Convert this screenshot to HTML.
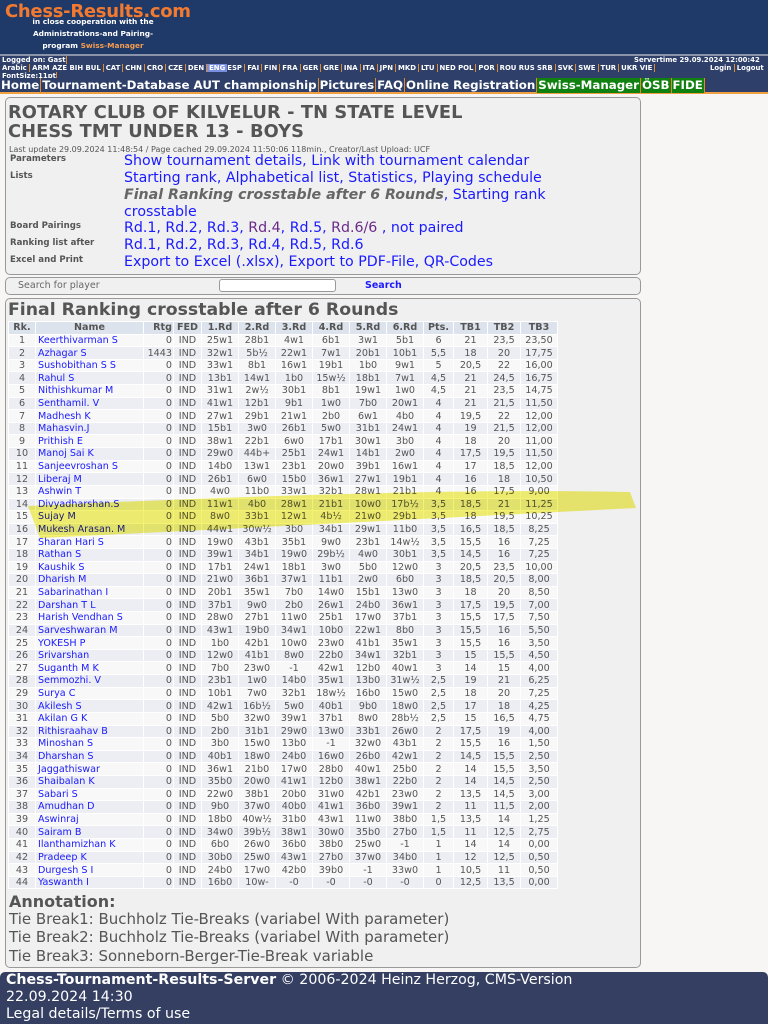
<!DOCTYPE html>
<html><head><meta charset="utf-8">
<style>
*{margin:0;padding:0;box-sizing:border-box}
body{width:768px;height:1024px;overflow:hidden;background:#f8f5f5;font-family:"DejaVu Sans",Verdana,sans-serif;color:#555;position:relative}
#hdr{position:absolute;left:0;top:0;width:768px;height:54px;background:#1f3a68}
#logo{position:absolute;left:5px;top:1px;color:#f27a30;font-weight:bold;font-size:18px;letter-spacing:-0.3px}
#tag{position:absolute;left:8px;top:16px;width:170px;color:#fff;font-size:7.4px;font-weight:bold;text-align:center;line-height:12px;white-space:nowrap}
#tag span{color:#f59b50}
#bar{position:absolute;left:0;top:54px;width:768px;height:40px;background:#2e3f6a;border-top:2px solid #8a93a8;font-size:6.9px;font-weight:bold;color:#fff;line-height:8px}
#bar .r{position:absolute;white-space:nowrap}
#bar i{font-style:normal;border-left:1px solid #e08a30;padding:0 2px}
#nav{position:absolute;left:0;top:78px;height:16px;width:768px;background:#2e3f6a;border-bottom:2px solid #f0a040;font-size:11.8px;font-weight:bold;color:#fff;white-space:nowrap}
#nav span{display:inline-block;height:15px;line-height:15px;padding:0 1px;border-right:1px solid #e08a30}
#nav .g{background:#108010}
.box{position:absolute;left:5px;width:636px;background:#f0f0f0;border:1px solid #999;border-radius:5px}
h1{position:absolute;left:8px;top:103px;font-size:17.8px;line-height:19px;font-weight:bold;color:#555;letter-spacing:0.1px}
.upd{position:absolute;left:9px;top:145px;font-size:8px;color:#555}
.lab{position:absolute;left:10px;font-size:8.6px;font-weight:bold;color:#555}
.lk{position:absolute;left:124px;font-size:14.2px;color:#1a1aff;white-space:nowrap}
.lk em{font-weight:bold;color:#666}
.v{color:#6a2a8a}
table{position:absolute;left:8px;top:321px;border-collapse:collapse;font-size:9.6px;table-layout:fixed}
td,th{height:12.62px;padding:0 1px;border:1px solid #fff;white-space:nowrap;text-align:center;color:#555;font-weight:normal;line-height:11px}
th{background:#dde3ec;font-weight:bold}
tr:nth-child(even) td{background:#f8f8f8}
tr:nth-child(odd) td{background:#eceef3}
td:nth-child(2){text-align:left;color:#1a1aff;padding-left:2px}
td:nth-child(3){text-align:right}
#foot{position:absolute;left:0;top:972px;width:768px;height:52px;background:#343f62;border-radius:5px 5px 0 0;color:#fff;font-size:14.2px;line-height:17px;padding:0 6px}
</style></head><body>
<div id="hdr"><div id="logo">Chess-Results.com</div><div id="tag">in close cooperation with the<br>Administrations-and Pairing-<br>program <span>Swiss-Manager</span></div></div>
<div id="bar">
<div class="r" style="left:2px;top:0px">Logged on: Gast<i></i></div>
<div class="r" style="left:634px;top:0px">Servertime 29.09.2024 12:00:42</div>
<div class="r" style="left:2px;top:8px">Arabic <i>ARM AZE BIH BUL</i><i>CAT</i><i>CHN</i><i>CRO</i><i>CZE</i><i>DEN</i><i style="background:#7b8fe0">ENG</i>ESP <i>FAI</i><i>FIN</i><i>FRA</i><i>GER</i><i>GRE</i><i>INA</i><i>ITA</i><i>JPN</i><i>MKD</i><i>LTU</i><i>NED POL</i><i>POR</i><i>ROU RUS SRB</i><i>SVK</i><i>SWE</i><i>TUR</i><i>UKR VIE</i><i></i></div>
<div class="r" style="left:710px;top:8px">Login <i>Logout</i></div>
<div class="r" style="left:2px;top:16px">FontSize:11pt<i></i></div>
</div>
<div id="nav"><span>Home</span><span>Tournament-Database AUT championship</span><span>Pictures</span><span>FAQ</span><span>Online Registration</span><span class="g">Swiss-Manager</span><span class="g">ÖSB</span><span class="g">FIDE</span></div>

<div class="box" style="top:97px;height:178px"></div>
<h1>ROTARY CLUB OF KILVELUR - TN STATE LEVEL<br>CHESS TMT UNDER 13 - BOYS</h1>
<div class="upd">Last update 29.09.2024 11:48:54 / Page cached 29.09.2024 11:50:06 118min., Creator/Last Upload: UCF</div>
<div class="lab" style="top:154px">Parameters</div>
<div class="lk" style="top:153px">Show tournament details, Link with tournament calendar</div>
<div class="lab" style="top:171px">Lists</div>
<div class="lk" style="top:170px">Starting rank, Alphabetical list, Statistics, Playing schedule</div>
<div class="lk" style="top:187px"><em><i>Final Ranking crosstable after 6 Rounds</i></em>, Starting rank</div>
<div class="lk" style="top:204px">crosstable</div>
<div class="lab" style="top:221px">Board Pairings</div>
<div class="lk" style="top:220px">Rd.1, Rd.2, Rd.3, <span class="v">Rd.4</span>, Rd.5, <span class="v">Rd.6/6</span> , not paired</div>
<div class="lab" style="top:238px">Ranking list after</div>
<div class="lk" style="top:237px">Rd.1, Rd.2, Rd.3, Rd.4, Rd.5, Rd.6</div>
<div class="lab" style="top:255px">Excel and Print</div>
<div class="lk" style="top:254px">Export to Excel (.xlsx), Export to PDF-File, QR-Codes</div>

<div class="box" style="top:277px;height:18px"></div>
<div style="position:absolute;left:18px;top:280px;font-size:9.5px;color:#666">Search for player</div>
<div style="position:absolute;left:219px;top:279px;width:117px;height:13px;background:#fff;border:1px solid #999;border-radius:3px"></div>
<div style="position:absolute;left:365px;top:280px;font-size:9.5px;color:#1a1aff;font-weight:bold">Search</div>

<div class="box" style="top:298px;height:670px"></div>
<div style="position:absolute;left:8px;top:300px;font-size:17.3px;font-weight:bold;color:#555">Final Ranking crosstable after 6 Rounds</div>
<table>
<colgroup><col style="width:27px"><col style="width:108px"><col style="width:30px"><col style="width:28px"><col style="width:37px"><col style="width:37px"><col style="width:37px"><col style="width:37px"><col style="width:37px"><col style="width:37px"><col style="width:30px"><col style="width:34px"><col style="width:33px"><col style="width:37px"></colgroup>
<tr><th>Rk.</th><th>Name</th><th style="text-align:right">Rtg</th><th>FED</th><th>1.Rd</th><th>2.Rd</th><th>3.Rd</th><th>4.Rd</th><th>5.Rd</th><th>6.Rd</th><th>Pts.</th><th>TB1</th><th>TB2</th><th>TB3</th></tr>
<tr><td>1</td><td>Keerthivarman S</td><td>0</td><td>IND</td><td>25w1</td><td>28b1</td><td>4w1</td><td>6b1</td><td>3w1</td><td>5b1</td><td>6</td><td>21</td><td>23,5</td><td>23,50</td></tr>
<tr><td>2</td><td>Azhagar S</td><td>1443</td><td>IND</td><td>32w1</td><td>5b½</td><td>22w1</td><td>7w1</td><td>20b1</td><td>10b1</td><td>5,5</td><td>18</td><td>20</td><td>17,75</td></tr>
<tr><td>3</td><td>Sushobithan S S</td><td>0</td><td>IND</td><td>33w1</td><td>8b1</td><td>16w1</td><td>19b1</td><td>1b0</td><td>9w1</td><td>5</td><td>20,5</td><td>22</td><td>16,00</td></tr>
<tr><td>4</td><td>Rahul S</td><td>0</td><td>IND</td><td>13b1</td><td>14w1</td><td>1b0</td><td>15w½</td><td>18b1</td><td>7w1</td><td>4,5</td><td>21</td><td>24,5</td><td>16,75</td></tr>
<tr><td>5</td><td>Nithishkumar M</td><td>0</td><td>IND</td><td>31w1</td><td>2w½</td><td>30b1</td><td>8b1</td><td>19w1</td><td>1w0</td><td>4,5</td><td>21</td><td>23,5</td><td>14,75</td></tr>
<tr><td>6</td><td>Senthamil. V</td><td>0</td><td>IND</td><td>41w1</td><td>12b1</td><td>9b1</td><td>1w0</td><td>7b0</td><td>20w1</td><td>4</td><td>21</td><td>21,5</td><td>11,50</td></tr>
<tr><td>7</td><td>Madhesh K</td><td>0</td><td>IND</td><td>27w1</td><td>29b1</td><td>21w1</td><td>2b0</td><td>6w1</td><td>4b0</td><td>4</td><td>19,5</td><td>22</td><td>12,00</td></tr>
<tr><td>8</td><td>Mahasvin.J</td><td>0</td><td>IND</td><td>15b1</td><td>3w0</td><td>26b1</td><td>5w0</td><td>31b1</td><td>24w1</td><td>4</td><td>19</td><td>21,5</td><td>12,00</td></tr>
<tr><td>9</td><td>Prithish E</td><td>0</td><td>IND</td><td>38w1</td><td>22b1</td><td>6w0</td><td>17b1</td><td>30w1</td><td>3b0</td><td>4</td><td>18</td><td>20</td><td>11,00</td></tr>
<tr><td>10</td><td>Manoj Sai K</td><td>0</td><td>IND</td><td>29w0</td><td>44b+</td><td>25b1</td><td>24w1</td><td>14b1</td><td>2w0</td><td>4</td><td>17,5</td><td>19,5</td><td>11,50</td></tr>
<tr><td>11</td><td>Sanjeevroshan S</td><td>0</td><td>IND</td><td>14b0</td><td>13w1</td><td>23b1</td><td>20w0</td><td>39b1</td><td>16w1</td><td>4</td><td>17</td><td>18,5</td><td>12,00</td></tr>
<tr><td>12</td><td>Liberaj M</td><td>0</td><td>IND</td><td>26b1</td><td>6w0</td><td>15b0</td><td>36w1</td><td>27w1</td><td>19b1</td><td>4</td><td>16</td><td>18</td><td>10,50</td></tr>
<tr><td>13</td><td>Ashwin T</td><td>0</td><td>IND</td><td>4w0</td><td>11b0</td><td>33w1</td><td>32b1</td><td>28w1</td><td>21b1</td><td>4</td><td>16</td><td>17,5</td><td>9,00</td></tr>
<tr><td>14</td><td>Divyadharshan.S</td><td>0</td><td>IND</td><td>11w1</td><td>4b0</td><td>28w1</td><td>21b1</td><td>10w0</td><td>17b½</td><td>3,5</td><td>18,5</td><td>21</td><td>11,25</td></tr>
<tr><td>15</td><td>Sujay M</td><td>0</td><td>IND</td><td>8w0</td><td>33b1</td><td>12w1</td><td>4b½</td><td>21w0</td><td>29b1</td><td>3,5</td><td>18</td><td>19,5</td><td>10,25</td></tr>
<tr><td>16</td><td>Mukesh Arasan. M</td><td>0</td><td>IND</td><td>44w1</td><td>30w½</td><td>3b0</td><td>34b1</td><td>29w1</td><td>11b0</td><td>3,5</td><td>16,5</td><td>18,5</td><td>8,25</td></tr>
<tr><td>17</td><td>Sharan Hari S</td><td>0</td><td>IND</td><td>19w0</td><td>43b1</td><td>35b1</td><td>9w0</td><td>23b1</td><td>14w½</td><td>3,5</td><td>15,5</td><td>16</td><td>7,25</td></tr>
<tr><td>18</td><td>Rathan S</td><td>0</td><td>IND</td><td>39w1</td><td>34b1</td><td>19w0</td><td>29b½</td><td>4w0</td><td>30b1</td><td>3,5</td><td>14,5</td><td>16</td><td>7,25</td></tr>
<tr><td>19</td><td>Kaushik S</td><td>0</td><td>IND</td><td>17b1</td><td>24w1</td><td>18b1</td><td>3w0</td><td>5b0</td><td>12w0</td><td>3</td><td>20,5</td><td>23,5</td><td>10,00</td></tr>
<tr><td>20</td><td>Dharish M</td><td>0</td><td>IND</td><td>21w0</td><td>36b1</td><td>37w1</td><td>11b1</td><td>2w0</td><td>6b0</td><td>3</td><td>18,5</td><td>20,5</td><td>8,00</td></tr>
<tr><td>21</td><td>Sabarinathan I</td><td>0</td><td>IND</td><td>20b1</td><td>35w1</td><td>7b0</td><td>14w0</td><td>15b1</td><td>13w0</td><td>3</td><td>18</td><td>20</td><td>8,50</td></tr>
<tr><td>22</td><td>Darshan T L</td><td>0</td><td>IND</td><td>37b1</td><td>9w0</td><td>2b0</td><td>26w1</td><td>24b0</td><td>36w1</td><td>3</td><td>17,5</td><td>19,5</td><td>7,00</td></tr>
<tr><td>23</td><td>Harish Vendhan S</td><td>0</td><td>IND</td><td>28w0</td><td>27b1</td><td>11w0</td><td>25b1</td><td>17w0</td><td>37b1</td><td>3</td><td>15,5</td><td>17,5</td><td>7,50</td></tr>
<tr><td>24</td><td>Sarveshwaran M</td><td>0</td><td>IND</td><td>43w1</td><td>19b0</td><td>34w1</td><td>10b0</td><td>22w1</td><td>8b0</td><td>3</td><td>15,5</td><td>16</td><td>5,50</td></tr>
<tr><td>25</td><td>YOKESH P</td><td>0</td><td>IND</td><td>1b0</td><td>42b1</td><td>10w0</td><td>23w0</td><td>41b1</td><td>35w1</td><td>3</td><td>15,5</td><td>16</td><td>3,50</td></tr>
<tr><td>26</td><td>Srivarshan</td><td>0</td><td>IND</td><td>12w0</td><td>41b1</td><td>8w0</td><td>22b0</td><td>34w1</td><td>32b1</td><td>3</td><td>15</td><td>15,5</td><td>4,50</td></tr>
<tr><td>27</td><td>Suganth M K</td><td>0</td><td>IND</td><td>7b0</td><td>23w0</td><td>-1</td><td>42w1</td><td>12b0</td><td>40w1</td><td>3</td><td>14</td><td>15</td><td>4,00</td></tr>
<tr><td>28</td><td>Semmozhi. V</td><td>0</td><td>IND</td><td>23b1</td><td>1w0</td><td>14b0</td><td>35w1</td><td>13b0</td><td>31w½</td><td>2,5</td><td>19</td><td>21</td><td>6,25</td></tr>
<tr><td>29</td><td>Surya C</td><td>0</td><td>IND</td><td>10b1</td><td>7w0</td><td>32b1</td><td>18w½</td><td>16b0</td><td>15w0</td><td>2,5</td><td>18</td><td>20</td><td>7,25</td></tr>
<tr><td>30</td><td>Akilesh S</td><td>0</td><td>IND</td><td>42w1</td><td>16b½</td><td>5w0</td><td>40b1</td><td>9b0</td><td>18w0</td><td>2,5</td><td>17</td><td>18</td><td>4,25</td></tr>
<tr><td>31</td><td>Akilan G K</td><td>0</td><td>IND</td><td>5b0</td><td>32w0</td><td>39w1</td><td>37b1</td><td>8w0</td><td>28b½</td><td>2,5</td><td>15</td><td>16,5</td><td>4,75</td></tr>
<tr><td>32</td><td>Rithisraahav B</td><td>0</td><td>IND</td><td>2b0</td><td>31b1</td><td>29w0</td><td>13w0</td><td>33b1</td><td>26w0</td><td>2</td><td>17,5</td><td>19</td><td>4,00</td></tr>
<tr><td>33</td><td>Minoshan S</td><td>0</td><td>IND</td><td>3b0</td><td>15w0</td><td>13b0</td><td>-1</td><td>32w0</td><td>43b1</td><td>2</td><td>15,5</td><td>16</td><td>1,50</td></tr>
<tr><td>34</td><td>Dharshan S</td><td>0</td><td>IND</td><td>40b1</td><td>18w0</td><td>24b0</td><td>16w0</td><td>26b0</td><td>42w1</td><td>2</td><td>14,5</td><td>15,5</td><td>2,50</td></tr>
<tr><td>35</td><td>Jaggathiswar</td><td>0</td><td>IND</td><td>36w1</td><td>21b0</td><td>17w0</td><td>28b0</td><td>40w1</td><td>25b0</td><td>2</td><td>14</td><td>15,5</td><td>3,50</td></tr>
<tr><td>36</td><td>Shaibalan K</td><td>0</td><td>IND</td><td>35b0</td><td>20w0</td><td>41w1</td><td>12b0</td><td>38w1</td><td>22b0</td><td>2</td><td>14</td><td>14,5</td><td>2,50</td></tr>
<tr><td>37</td><td>Sabari S</td><td>0</td><td>IND</td><td>22w0</td><td>38b1</td><td>20b0</td><td>31w0</td><td>42b1</td><td>23w0</td><td>2</td><td>13,5</td><td>14,5</td><td>3,00</td></tr>
<tr><td>38</td><td>Amudhan D</td><td>0</td><td>IND</td><td>9b0</td><td>37w0</td><td>40b0</td><td>41w1</td><td>36b0</td><td>39w1</td><td>2</td><td>11</td><td>11,5</td><td>2,00</td></tr>
<tr><td>39</td><td>Aswinraj</td><td>0</td><td>IND</td><td>18b0</td><td>40w½</td><td>31b0</td><td>43w1</td><td>11w0</td><td>38b0</td><td>1,5</td><td>13,5</td><td>14</td><td>1,25</td></tr>
<tr><td>40</td><td>Sairam B</td><td>0</td><td>IND</td><td>34w0</td><td>39b½</td><td>38w1</td><td>30w0</td><td>35b0</td><td>27b0</td><td>1,5</td><td>11</td><td>12,5</td><td>2,75</td></tr>
<tr><td>41</td><td>Ilanthamizhan K</td><td>0</td><td>IND</td><td>6b0</td><td>26w0</td><td>36b0</td><td>38b0</td><td>25w0</td><td>-1</td><td>1</td><td>14</td><td>14</td><td>0,00</td></tr>
<tr><td>42</td><td>Pradeep K</td><td>0</td><td>IND</td><td>30b0</td><td>25w0</td><td>43w1</td><td>27b0</td><td>37w0</td><td>34b0</td><td>1</td><td>12</td><td>12,5</td><td>0,50</td></tr>
<tr><td>43</td><td>Durgesh S I</td><td>0</td><td>IND</td><td>24b0</td><td>17w0</td><td>42b0</td><td>39b0</td><td>-1</td><td>33w0</td><td>1</td><td>10,5</td><td>11</td><td>0,50</td></tr>
<tr><td>44</td><td>Yaswanth I</td><td>0</td><td>IND</td><td>16b0</td><td>10w-</td><td>-0</td><td>-0</td><td>-0</td><td>-0</td><td>0</td><td>12,5</td><td>13,5</td><td>0,00</td></tr>
</table>
<svg style="position:absolute;left:0;top:480px;mix-blend-mode:multiply" width="768" height="70"><path d="M28,26 C200,18 450,8 630,12 L636,28 C480,36 250,48 40,58 Z" fill="#f2ee5a" opacity="0.85"/></svg>

<div style="position:absolute;left:9px;top:892px;font-size:16px;font-weight:bold;color:#555">Annotation:</div>
<div style="position:absolute;left:9px;top:910px;font-size:15px;line-height:18.4px;color:#555">Tie Break1: Buchholz Tie-Breaks (variabel With parameter)<br>Tie Break2: Buchholz Tie-Breaks (variabel With parameter)<br>Tie Break3: Sonneborn-Berger-Tie-Break variable</div>

<div id="foot"><b>Chess-Tournament-Results-Server</b> © 2006-2024 Heinz Herzog, CMS-Version<br>22.09.2024 14:30<br>Legal details/Terms of use</div>
</body></html>
